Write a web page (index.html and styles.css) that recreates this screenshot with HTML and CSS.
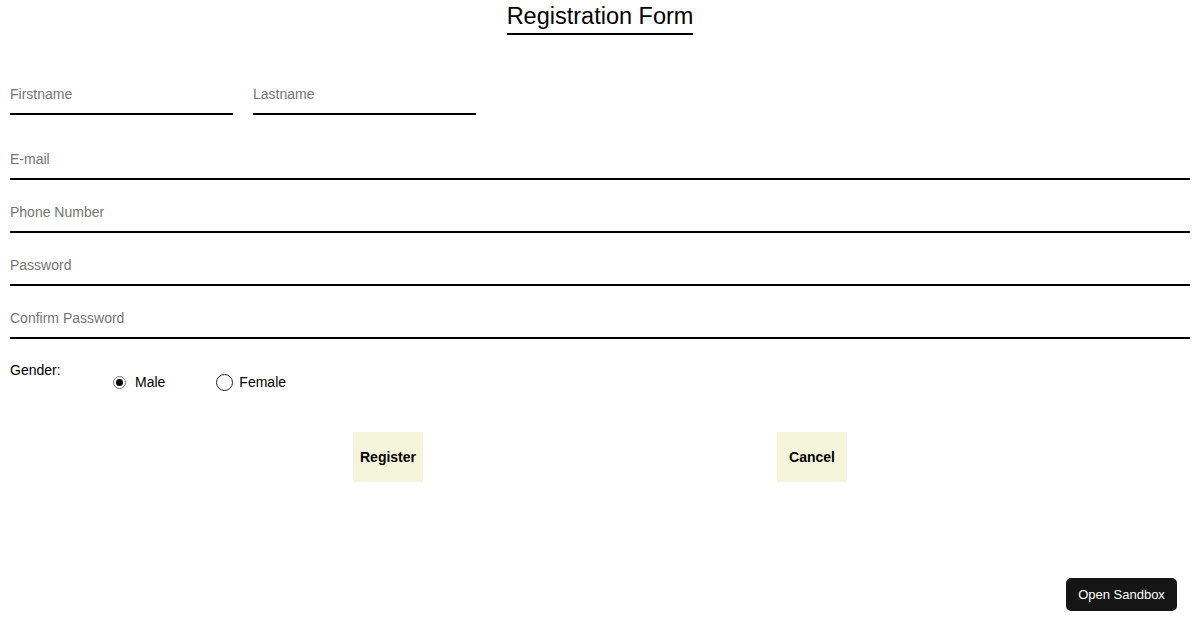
FILE: index.html
```html
<!DOCTYPE html>
<html>
<head>
<meta charset="utf-8">
<link rel="stylesheet" href="styles.css">
</head>
<body>
<div class="page">
  <div class="title-wrap"><h1 class="title">Registration Form</h1></div>
  <form class="form">
    <div class="name-row">
      <input class="field short" type="text" placeholder="Firstname">
      <input class="field short" type="text" placeholder="Lastname">
    </div>
    <input class="field wide first-wide" type="email" placeholder="E-mail">
    <input class="field wide" type="text" placeholder="Phone Number">
    <input class="field wide" type="password" placeholder="Password">
    <input class="field wide" type="password" placeholder="Confirm Password">
    <div class="gender-row">
      <span class="gender-label">Gender:</span>
      <div class="options">
        <label class="option"><span class="radio checked"></span>Male</label>
        <label class="option"><span class="radio big"></span>Female</label>
      </div>
    </div>
    <div class="actions">
      <button type="button" class="btn">Register</button>
      <button type="button" class="btn">Cancel</button>
    </div>
  </form>
</div>
<button type="button" class="sandbox">Open Sandbox</button>
</body>
</html>
```

FILE: styles.css
```css
html, body {
  margin: 0;
  padding: 0;
  background: #ffffff;
  font-family: "Liberation Sans", Arial, sans-serif;
  color: #000;
}
.page {
  padding: 0 10px;
}
.title-wrap {
  text-align: center;
  padding-top: 2px;
}
.title {
  display: inline-block;
  margin: 0;
  font-size: 23.5px;
  font-weight: normal;
  line-height: 28px;
  padding-bottom: 3px;
  border-bottom: 2px solid #000;
}
.form {
  display: flex;
  flex-direction: column;
  padding-top: 41px;
}
.name-row {
  display: flex;
  gap: 20px;
}
.field {
  font-family: "Liberation Sans", Arial, sans-serif;
  font-size: 14px;
  line-height: 17px;
  height: 39px;
  box-sizing: border-box;
  border: none;
  border-bottom: 2px solid #000;
  padding: 9px 0 11px;
  outline: none;
  background: transparent;
  color: #000;
}
.field::placeholder {
  color: #757575;
}
.short {
  width: 223px;
}
.wide {
  width: 100%;
  margin-top: 14px;
}
.first-wide {
  margin-top: 26px;
}
.gender-row {
  display: flex;
  align-items: flex-start;
  margin-top: 23px;
  font-size: 14px;
}
.gender-label {
  line-height: 17px;
  width: 103px;
}
.options {
  display: flex;
  gap: 53px;
  padding-top: 12px;
}
.option {
  display: flex;
  align-items: center;
  line-height: 17px;
}
.radio {
  box-sizing: border-box;
  width: 13px;
  height: 13px;
  border-radius: 50%;
  border: 1px solid #767676;
  margin-right: 9px;
  display: inline-flex;
  align-items: center;
  justify-content: center;
  background: #fff;
}
.radio.checked::after {
  content: "";
  width: 7px;
  height: 7px;
  border-radius: 50%;
  background: #000;
}
.radio.big {
  width: 17px;
  height: 17px;
  border: 1.3px solid #222;
  margin-right: 6px;
  margin-left: -2px;
}
.actions {
  display: flex;
  justify-content: center;
  gap: 354px;
  margin-top: 41px;
}
.btn {
  width: 70px;
  height: 50px;
  border: none;
  background: #f5f5dc;
  font-family: "Liberation Sans", Arial, sans-serif;
  font-size: 14px;
  font-weight: bold;
  color: #000;
  padding: 0;
}
.sandbox {
  position: fixed;
  right: 23px;
  bottom: 19px;
  width: 111px;
  height: 33px;
  border: none;
  border-radius: 5px;
  background: #151515;
  color: #fff;
  font-family: "Liberation Sans", Arial, sans-serif;
  font-size: 13px;
  padding: 0;
}
```
